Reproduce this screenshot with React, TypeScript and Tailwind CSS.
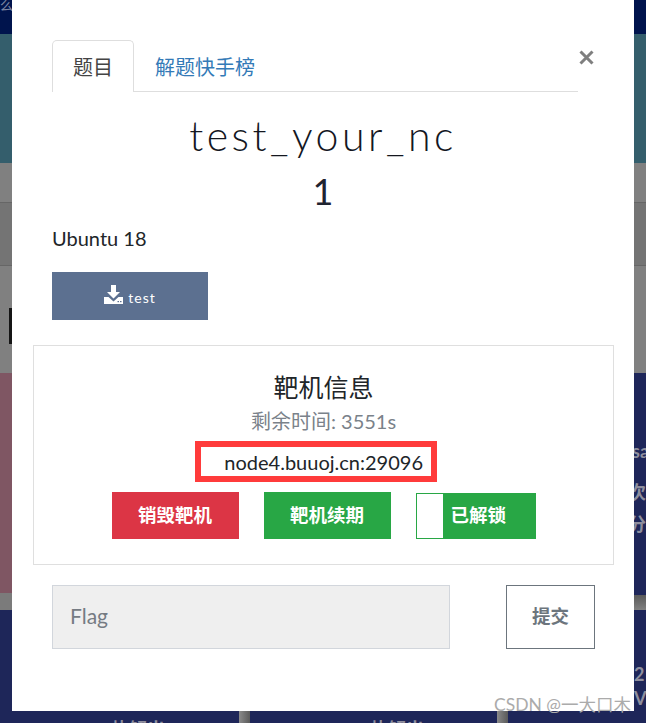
import React from 'react';

const font = "font-['Lato','Noto_Sans_CJK_SC',sans-serif]";

const DownloadIcon = () => (
  <svg width="19" height="19" viewBox="0 0 19 19" fill="none">
    <path d="M7 0h5v7h4l-6.500 6.500L3 7h4z" fill="#fff" />
    <path d="M0 12h4.500l5 4.500 5-4.500H19v7H0z" fill="#fff" />
    <rect x="13.500" y="16" width="1.500" height="1.200" fill="#5c7090" />
    <rect x="16" y="16" width="1.500" height="1.200" fill="#5c7090" />
  </svg>
);

const Background = () => (
  <div className="flex flex-col w-full h-full">
    <div className="h-[34px] bg-[#00144d]" />
    <div className="h-[129px] bg-[#345e6c]" />
    <div className="h-[40px] bg-[#808080] border-b border-[#666666]" />
    <div className="h-[63px] bg-[#747474] border-b border-[#666666]" />
    <div className="h-[107px] bg-[#808080]" />
    <div className="flex h-[237px]">
      <div className="w-[12px] flex flex-col">
        <div className="h-[220px] bg-[#7f5663]" />
        <div className="h-[17px] bg-[#7b7b7b]" />
      </div>
      <div className="flex-1" />
      <div className="w-[12px] flex flex-col">
        <div className="h-[222px] bg-[#1e2659]" />
        <div className="h-[15px] bg-gradient-to-b from-[#5a5a5a] to-[#808080]" />
      </div>
    </div>
    <div className="flex-1 flex bg-[#1e2659]">
      <div className="w-[239px]" />
      <div className="w-[11px] bg-gradient-to-r from-[#8a8a8a] to-[#5a5a5a]" />
      <div className="w-[247px]" />
      <div className="w-[11px] bg-gradient-to-r from-[#8a8a8a] to-[#5a5a5a]" />
    </div>
  </div>
);

export default function App() {
  return (
    <div className={`relative w-[646px] h-[723px] overflow-hidden ${font}`}>
      <Background />

      {/* bits of the page behind the modal */}
      <div className="absolute left-0 top-0 text-[13px] leading-[10px] text-[#7d86a3]">么</div>
      <div className="absolute left-[9px] top-[308px] w-[3px] h-[36px] bg-[#151515]" />
      <div className="absolute left-[634px] top-[440px] w-[12px] overflow-hidden text-[18px] leading-[22px] font-bold text-[#8e8e9e] whitespace-nowrap">
        <div className="-ml-[2px]">sa</div>
      </div>
      <div className="absolute left-[634px] top-[476px] w-[12px] overflow-hidden text-[18px] leading-[32px] font-bold text-[#8e8e9e]">
        <div className="-ml-[6px] w-[20px]">次</div>
        <div className="-ml-[6px] w-[20px]">分</div>
      </div>
      <div className="absolute left-[634px] top-[662px] w-[12px] overflow-hidden text-[18px] leading-[24px] font-bold text-[#8e8e9e]">
        <div>2</div>
        <div>V</div>
      </div>
      <div className="absolute left-[111px] top-[718px] text-[18px] leading-[22px] font-bold text-[#8e8e9e] whitespace-nowrap">热解出</div>
      <div className="absolute left-[370px] top-[718px] text-[18px] leading-[22px] font-bold text-[#8e8e9e] whitespace-nowrap">热解出</div>

      {/* modal */}
      <div className="absolute left-[12px] top-0 w-[622px] h-[711px] bg-white px-[40px] pt-[40px] text-[#212529]">
        <div className="flex h-[52px] w-[526px] border-b border-[#dedede]">
          <div className="w-[82px] h-[52px] bg-white border border-b-0 border-[#dedede] rounded-t-[5px] flex items-center justify-center text-[20px] text-[#444444]">
            题目
          </div>
          <div className="ml-[21px] pt-[2px] flex items-center text-[20px] text-[#337ab7]">解题快手榜</div>
        </div>

        <div className="mt-[22px] text-center text-[41px] leading-[44px] font-light tracking-[3.500px] text-[#14171f]">test_your_nc</div>
        <div className="mt-[11px] text-center text-[36px] leading-[44px] text-[#1f2330]">1</div>
        <div className="mt-[12px] text-[20px] leading-[26px] text-[#212529]">Ubuntu 18</div>

        <div className="mt-[21px] w-[156px] h-[48px] bg-[#5c7090] flex items-center justify-center gap-[5px] text-[14px] tracking-[1px] text-white">
          <span className="-mt-[3px]"><DownloadIcon /></span>
          <span className="pt-[3px]">test</span>
        </div>

        <div className="-ml-[19px] -mr-[20px] mt-[25px] h-[220px] border border-[#dfdfdf] flex flex-col items-center">
          <div className="mt-[24px] text-[25px] leading-[34px] text-[#212529]">靶机信息</div>
          <div className="mt-[4px] text-[20px] leading-[26px] text-[#7a828a]">剩余时间: 3551s</div>
          <div className="mt-[7px] mr-[15px] w-[242px] h-[41px] border-[6px] border-[#ff3b3b] flex items-center justify-end pr-[8px] text-[20px] text-[#212529]">
            node4.buuoj.cn:29096
          </div>
          <div className="mt-[10px] flex items-end gap-[25px] text-[18.500px] font-bold text-white">
            <div className="w-[127px] h-[47px] bg-[#dc3545] flex items-center justify-center">销毁靶机</div>
            <div className="w-[127px] h-[47px] bg-[#28a745] flex items-center justify-center">靶机续期</div>
            <div className="w-[120px] h-[46px] bg-[#28a745] border border-[#28a745] flex">
              <div className="w-[26px] bg-white" />
              <div className="ml-[8px] flex items-center">已解锁</div>
            </div>
          </div>
        </div>

        <div className="mt-[20px] flex justify-between w-[543px]">
          <div className="w-[398px] h-[64px] bg-[#efefef] border border-[#d2d6dc] flex items-center pl-[17px] pb-[2px] text-[21px] text-[#757b83]">Flag</div>
          <div className="w-[89px] h-[64px] border border-[#6c757d] flex items-center justify-center text-[18.500px] font-bold text-[#6c757d]">提交</div>
        </div>
      </div>

      {/* close */}
      <div className="absolute left-[577px] top-[47px] w-[18px] h-[20px] flex items-center justify-center">
        <svg width="15" height="15" viewBox="0 0 15 15">
          <path d="M1.500 1.500l12 12M13.500 1.500l-12 12" stroke="#7f7f7f" strokeWidth="3" />
        </svg>
      </div>

      {/* watermark */}
      <div className="absolute left-[494px] top-[694px] text-[17.500px] leading-[22px] text-[#ababab] whitespace-nowrap">CSDN @一大口木</div>
    </div>
  );
}
